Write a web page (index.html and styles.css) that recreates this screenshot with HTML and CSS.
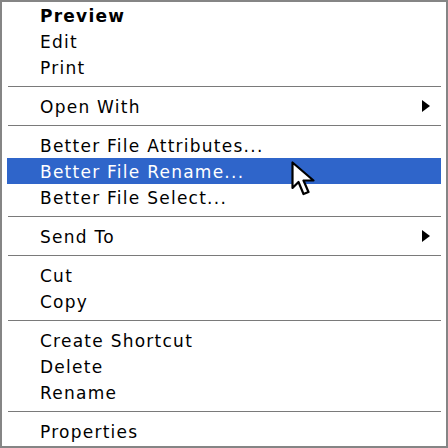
FILE: index.html
```html
<!DOCTYPE html>
<html lang="en">
<head>
  <meta charset="UTF-8">
  <meta name="viewport" content="width=device-width, initial-scale=1.0">
  <title>Context Menu</title>
  <link rel="stylesheet" href="styles.css">
</head>
<body>
  <div class="menu">
    <ul class="menu-list">
      <li class="item default">Preview</li>
      <li class="item">Edit</li>
      <li class="item">Print</li>
      <li class="sep"></li>
      <li class="item">Open With
        <svg class="sub" width="8" height="12" viewBox="0 0 8 12"><polygon points="0,0 8,6 0,12" fill="#000"/></svg>
      </li>
      <li class="sep"></li>
      <li class="item">Better File Attributes...</li>
      <li class="item active">Better File Rename...</li>
      <li class="item">Better File Select...</li>
      <li class="sep"></li>
      <li class="item">Send To
        <svg class="sub" width="8" height="12" viewBox="0 0 8 12"><polygon points="0,0 8,6 0,12" fill="#000"/></svg>
      </li>
      <li class="sep"></li>
      <li class="item">Cut</li>
      <li class="item">Copy</li>
      <li class="sep"></li>
      <li class="item">Create Shortcut</li>
      <li class="item">Delete</li>
      <li class="item">Rename</li>
      <li class="sep"></li>
      <li class="item">Properties</li>
    </ul>

    <!-- mouse pointer over the hovered item -->
    <svg class="cursor" width="26" height="36" viewBox="0 0 26 36">
      <path d="M1.5 1.5 L1.5 27 L7.5 21 L12.5 33 L17.5 31 L12.5 19.5 L22.5 19.5 Z"
            fill="#fff" stroke="#000" stroke-width="2.2" stroke-linejoin="round"/>
    </svg>
  </div>
</body>
</html>
```

FILE: styles.css
```css
html, body {
  margin: 0;
  padding: 0;
  background-color: white;
}
.menu {
  position: relative;
  box-sizing: border-box;
  width: 448px;
  height: 448px;
  border: 2px solid #858585;
  background-color: #fff;
  font-family: 'DejaVu Sans', Verdana, sans-serif;
  font-size: 17px;
  letter-spacing: 1.25px;
  color: #000;
}
.menu-list {
  list-style: none;
  margin: 0;
  padding: 0 5px;
}
.item {
  box-sizing: border-box;
  display: flex;
  align-items: center;
  justify-content: space-between;
  height: 26px;
  line-height: 24px;
  padding: 2px 11px 0 33px;
}
.item.default {
  font-weight: bold;
}
.item.active {
  background-color: #2f65ca;
  color: #fff;
}
.sub {
  display: block;
  margin-top: -2px;
}
.sep {
  height: 1px;
  margin: 6px 0 6px 1px;
  background-color: #7a7a7a;
}
.cursor {
  position: absolute;
  left: 289px;
  top: 159px;
}
```
